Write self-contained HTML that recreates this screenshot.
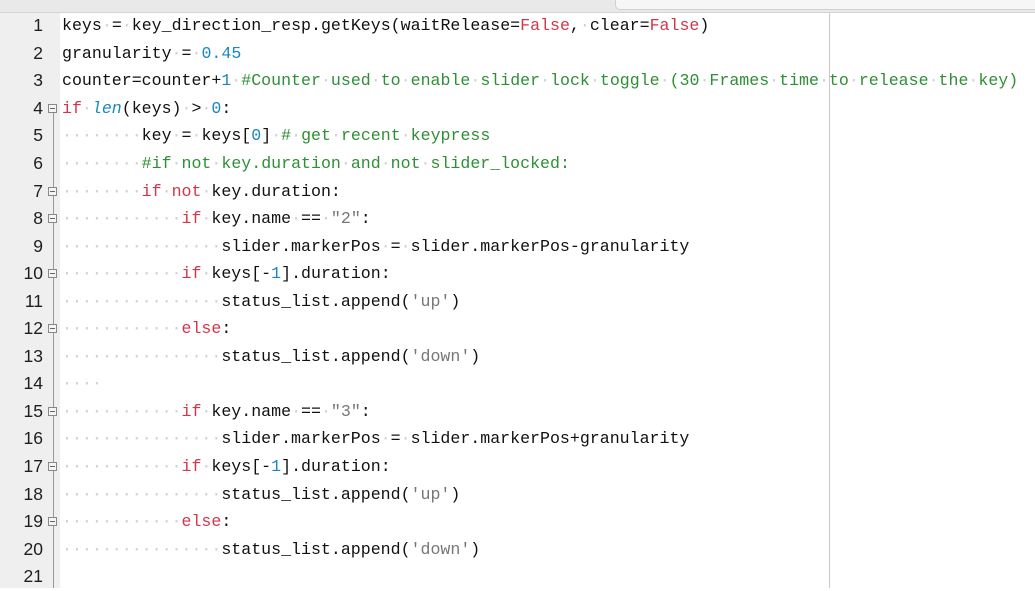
<!DOCTYPE html><html><head><meta charset="utf-8"><style>
body{margin:0;width:1035px;height:588px;overflow:hidden;background:#fff;position:relative;font-family:"Liberation Mono",monospace}
.top{position:absolute;left:0;top:0;width:1035px;height:12px;background:#e9e9e9;border-bottom:1px solid #d4d4d4}
.tab{position:absolute;left:615px;top:-6px;width:430px;height:14px;background:#f6f6f6;border:1px solid #cfcfcf;border-radius:5px}
.gut{position:absolute;left:0;top:13px;width:60px;height:575px;background:#efefef}
.edge{position:absolute;left:829px;top:13px;width:1px;height:575px;background:#c8c8c8}
.ln{position:absolute;left:0;width:43px;text-align:right;font-family:"Liberation Sans",sans-serif;font-size:17.5px;color:#1e1e1e;height:27.55px;line-height:27.55px}
.c{position:absolute;left:62px;white-space:pre;font-size:16.6px;height:27.55px;line-height:27.55px;color:#111}
i{font-style:normal;color:#d0d0d0}
.k{color:#d2364a}.n{color:#1a86c2}.g{color:#2f8f35}.s{color:#777}.f{color:#1a86c2;font-style:italic}
.fl{position:absolute;left:53px;top:110px;width:1px;height:478px;background:#999}
.b{position:absolute;left:48px;width:9px;height:9px;border:1px solid #888;background:#f4f4f4;box-sizing:border-box}
.b:after{content:"";position:absolute;left:1px;top:3px;width:5px;height:1px;background:#666}
</style></head><body>
<div class="top"><div class="tab"></div></div>
<div class="gut"></div><div class="edge"></div><div class="fl"></div>
<div class="ln" style="top:12.2px">1</div><div class="ln" style="top:39.75px">2</div><div class="ln" style="top:67.3px">3</div><div class="ln" style="top:94.85px">4</div><div class="ln" style="top:122.4px">5</div><div class="ln" style="top:149.95px">6</div><div class="ln" style="top:177.5px">7</div><div class="ln" style="top:205.05px">8</div><div class="ln" style="top:232.6px">9</div><div class="ln" style="top:260.15px">10</div><div class="ln" style="top:287.7px">11</div><div class="ln" style="top:315.25px">12</div><div class="ln" style="top:342.8px">13</div><div class="ln" style="top:370.35px">14</div><div class="ln" style="top:397.9px">15</div><div class="ln" style="top:425.45px">16</div><div class="ln" style="top:453px">17</div><div class="ln" style="top:480.55px">18</div><div class="ln" style="top:508.1px">19</div><div class="ln" style="top:535.65px">20</div><div class="ln" style="top:563.2px">21</div>
<div class="b" style="top:104px"></div><div class="b" style="top:187px"></div><div class="b" style="top:214px"></div><div class="b" style="top:269px"></div><div class="b" style="top:324px"></div><div class="b" style="top:407px"></div><div class="b" style="top:462px"></div><div class="b" style="top:517px"></div>
<div class="c" style="top:12.2px">keys<i>·</i>=<i>·</i>key_direction_resp.getKeys(waitRelease=<span class="k">False</span>,<i>·</i>clear=<span class="k">False</span>)</div>
<div class="c" style="top:39.75px">granularity<i>·</i>=<i>·</i><span class="n">0.45</span></div>
<div class="c" style="top:67.3px">counter=counter+<span class="n">1</span><i>·</i><span class="g">#Counter<i>·</i>used<i>·</i>to<i>·</i>enable<i>·</i>slider<i>·</i>lock<i>·</i>toggle<i>·</i>(30<i>·</i>Frames<i>·</i>time<i>·</i>to<i>·</i>release<i>·</i>the<i>·</i>key)</span></div>
<div class="c" style="top:94.85px"><span class="k">if</span><i>·</i><span class="f">len</span>(keys)<i>·</i>&gt;<i>·</i><span class="n">0</span>:</div>
<div class="c" style="top:122.4px"><i>········</i>key<i>·</i>=<i>·</i>keys[<span class="n">0</span>]<i>·</i><span class="g">#<i>·</i>get<i>·</i>recent<i>·</i>keypress</span></div>
<div class="c" style="top:149.95px"><i>········</i><span class="g">#if<i>·</i>not<i>·</i>key.duration<i>·</i>and<i>·</i>not<i>·</i>slider_locked:</span></div>
<div class="c" style="top:177.5px"><i>········</i><span class="k">if</span><i>·</i><span class="k">not</span><i>·</i>key.duration:</div>
<div class="c" style="top:205.05px"><i>············</i><span class="k">if</span><i>·</i>key.name<i>·</i>==<i>·</i><span class="s">"2"</span>:</div>
<div class="c" style="top:232.6px"><i>················</i>slider.markerPos<i>·</i>=<i>·</i>slider.markerPos-granularity</div>
<div class="c" style="top:260.15px"><i>············</i><span class="k">if</span><i>·</i>keys[-<span class="n">1</span>].duration:</div>
<div class="c" style="top:287.7px"><i>················</i>status_list.append(<span class="s">'up'</span>)</div>
<div class="c" style="top:315.25px"><i>············</i><span class="k">else</span>:</div>
<div class="c" style="top:342.8px"><i>················</i>status_list.append(<span class="s">'down'</span>)</div>
<div class="c" style="top:370.35px"><i>····</i></div>
<div class="c" style="top:397.9px"><i>············</i><span class="k">if</span><i>·</i>key.name<i>·</i>==<i>·</i><span class="s">"3"</span>:</div>
<div class="c" style="top:425.45px"><i>················</i>slider.markerPos<i>·</i>=<i>·</i>slider.markerPos+granularity</div>
<div class="c" style="top:453px"><i>············</i><span class="k">if</span><i>·</i>keys[-<span class="n">1</span>].duration:</div>
<div class="c" style="top:480.55px"><i>················</i>status_list.append(<span class="s">'up'</span>)</div>
<div class="c" style="top:508.1px"><i>············</i><span class="k">else</span>:</div>
<div class="c" style="top:535.65px"><i>················</i>status_list.append(<span class="s">'down'</span>)</div>
</body></html>
